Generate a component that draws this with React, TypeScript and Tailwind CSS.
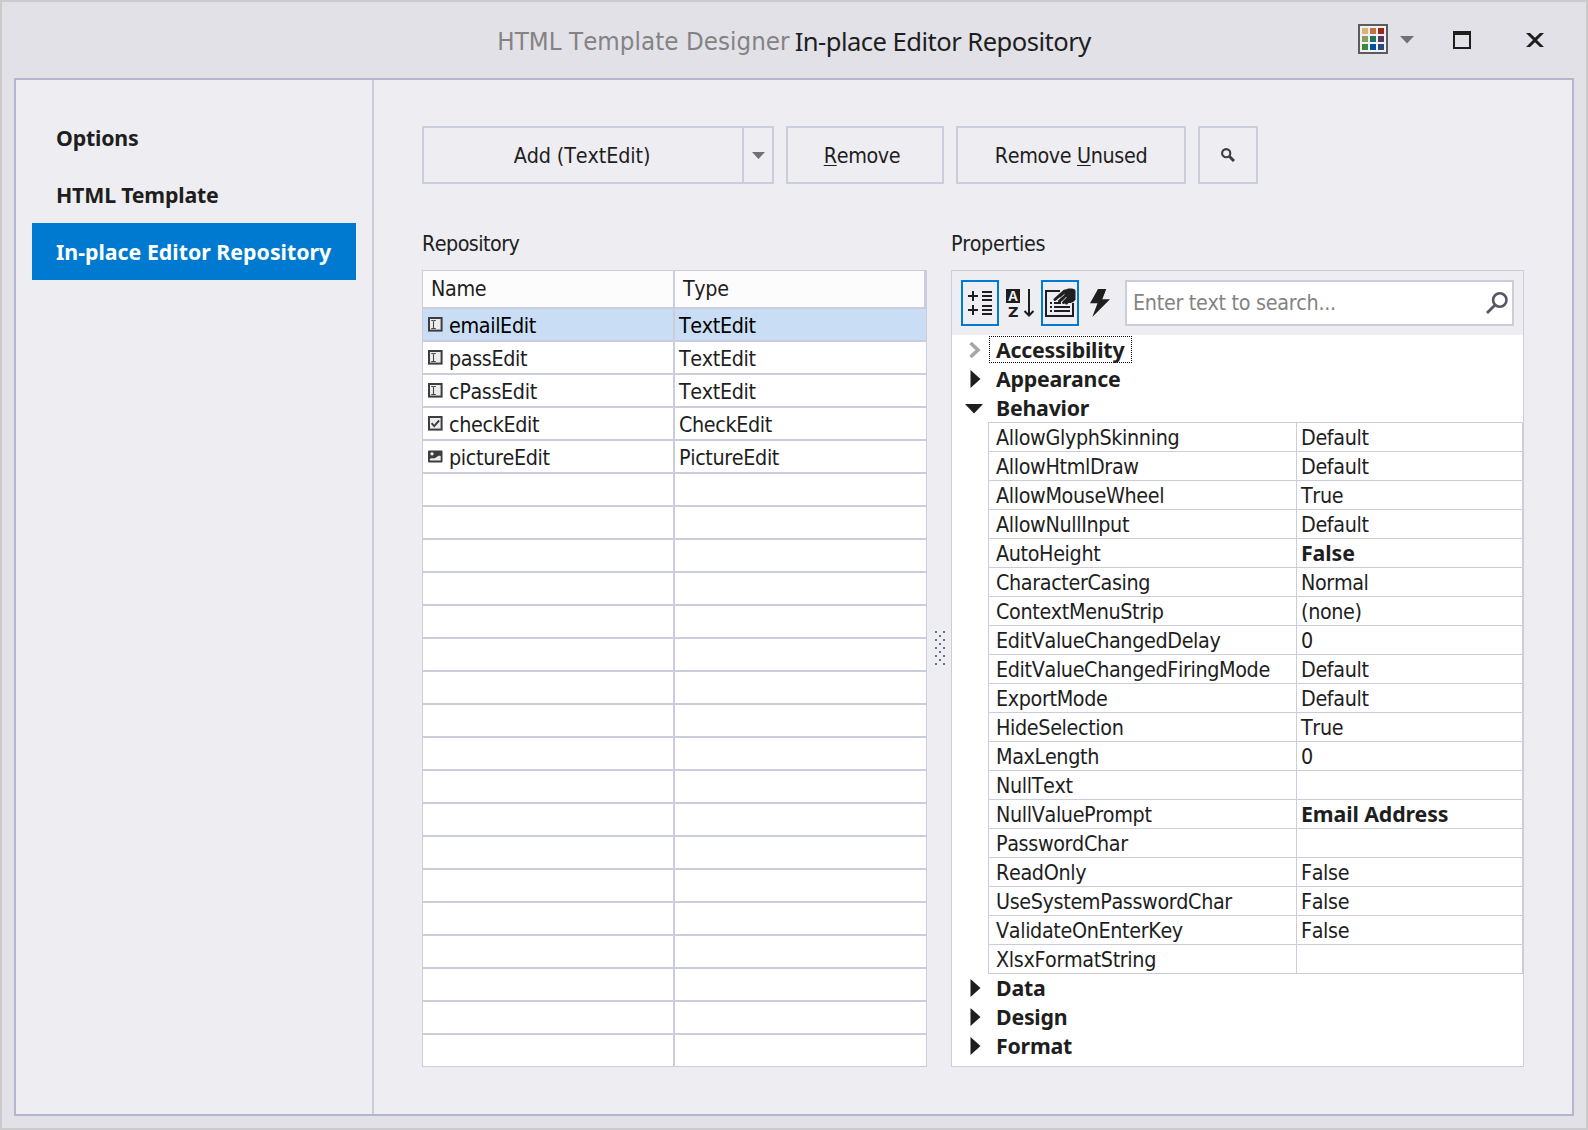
import { useState } from "react";
import clsx from "clsx";

const MENU = ["Options", "HTML Template", "In-place Editor Repository"];

const REPOSITORY = [
  { name: "emailEdit", type: "TextEdit" },
  { name: "passEdit", type: "TextEdit" },
  { name: "cPassEdit", type: "TextEdit" },
  { name: "checkEdit", type: "CheckEdit" },
  { name: "pictureEdit", type: "PictureEdit" },
];

const EMPTY_ROWS = 18;

const BEHAVIOR = [
  { name: "AllowGlyphSkinning", value: "Default" },
  { name: "AllowHtmlDraw", value: "Default" },
  { name: "AllowMouseWheel", value: "True" },
  { name: "AllowNullInput", value: "Default" },
  { name: "AutoHeight", value: "False", changed: true },
  { name: "CharacterCasing", value: "Normal" },
  { name: "ContextMenuStrip", value: "(none)" },
  { name: "EditValueChangedDelay", value: "0" },
  { name: "EditValueChangedFiringMode", value: "Default" },
  { name: "ExportMode", value: "Default" },
  { name: "HideSelection", value: "True" },
  { name: "MaxLength", value: "0" },
  { name: "NullText", value: "" },
  { name: "NullValuePrompt", value: "Email Address", changed: true },
  { name: "PasswordChar", value: "" },
  { name: "ReadOnly", value: "False" },
  { name: "UseSystemPasswordChar", value: "False" },
  { name: "ValidateOnEnterKey", value: "False" },
  { name: "XlsxFormatString", value: "" },
];

const PALETTE = [
  "bg-[#deb277]",
  "bg-[#c3713f]",
  "bg-[#a32413]",
  "bg-[#8b9f58]",
  "bg-[#1d7265]",
  "bg-[#543b59]",
  "bg-[#3b8a34]",
  "bg-[#0050a0]",
  "bg-[#2a4a7f]",
];

const boldFont =
  "font-['Noto_Sans','DejaVu_Sans',sans-serif] font-bold [font-kerning:normal]";

const Caret = ({ width = 14 }: { width?: number }) => (
  <svg width={width} height={width / 2 + 1} viewBox="0 0 14 8" fill="#717171">
    <path d="M0 0h14L7 7.5z" />
  </svg>
);

const RowIcon = ({ type }: { type: string }) => {
  if (type === "PictureEdit") {
    return (
      <svg width="15" height="15" viewBox="0 0 15 15">
        <rect x="0" y="1.5" width="14.5" height="12" rx="1" fill="#3d3d3f" />
        <circle cx="4" cy="4.8" r="1.6" fill="#fff" />
        <path d="M1.8 11.5V10C4 8.5 6 10 8 8.500s3-2 4.700-1.500v4.500z" fill="#ededed" />
      </svg>
    );
  }
  return (
    <svg width="15" height="15" viewBox="0 0 15 15" fill="none">
      <rect x="1" y="1" width="12.6" height="12.6" fill="#ececee" stroke="#3d3d3f" strokeWidth="2" />
      {type === "CheckEdit" ? (
        <path d="M3.6 7.2l2.6 2.9 4.9-5.6" stroke="#3d3d3f" strokeWidth="1.9" />
      ) : (
        <path d="M3.200 3.500h1.600l.7.6.7-.6h1.600M5.500 4v7M3.200 11.500h1.600l.7-.6.7.6h1.600" stroke="#4a4a4c" strokeWidth="1.100" />
      )}
    </svg>
  );
};

const Expander = ({ state }: { state: "focused" | "closed" | "open" }) => (
  <svg width="18" height="18" viewBox="0 0 18 18" fill="#1e1e1e">
    {state === "focused" && (
      <path d="M5.5 2l7.5 7-7.5 7" fill="none" stroke="#a6a6a6" strokeWidth="3.6" />
    )}
    {state === "closed" && <path d="M5.5 0v18L15.5 9z" />}
    {state === "open" && <path d="M0 5h18l-9 9.5z" />}
  </svg>
);

const Category = ({
  title,
  state = "closed",
}: {
  title: string;
  state?: "focused" | "closed" | "open";
}) => (
  <div className="flex h-[29px] items-center pl-[13px]">
    <Expander state={state} />
    <div
      className={clsx(
        boldFont,
        "ml-[6px] flex h-[27px] items-center border border-dotted pr-[7px] pl-[6px] tracking-[-0.23px]",
        state === "focused" ? "border-black" : "border-transparent"
      )}
    >
      {title}
    </div>
  </div>
);

const App = () => {
  const [page, setPage] = useState(MENU[2]);
  const [selected, setSelected] = useState("emailEdit");
  const [search, setSearch] = useState("");

  return (
    <div className="flex h-[1130px] w-[1588px] flex-col border-2 border-[#cbcbcb] bg-[#e2e1e7] px-3 pb-3 font-['DejaVu_Sans_Condensed','DejaVu_Sans',sans-serif] text-[21.33px] leading-none tracking-[-0.36px] text-[#1e1e1e] [font-kerning:none]">
      <header className="grid h-[76px] shrink-0 grid-cols-[1fr_auto_1fr] items-center">
        <div />
        <h1 className="flex gap-[5px] pt-1 text-[25.6px] whitespace-nowrap">
          <span className="tracking-[0.07px] text-[#838383]">HTML Template Designer</span>
          <span className="font-['Noto_Sans',sans-serif] tracking-[-0.54px]">
            In-place Editor Repository
          </span>
        </h1>
        <div className="flex items-center justify-end pr-[30px]">
          <div className="-mt-[2px] grid size-[30px] grid-cols-3 gap-[2px] border-2 border-[#5c5c5f] bg-[#f1f0f4] p-[2px]">
            {PALETTE.map((color) => (
              <div key={color} className={color} />
            ))}
          </div>
          <div className="ml-3">
            <Caret />
          </div>
          <div className="ml-[39px] size-[18px] border-2 border-t-4 border-[#1e1e1e]" />
          <svg className="ml-[55px]" width="18" height="14" viewBox="0 0 18 14" fill="#1e1e1e">
            <path d="M0 0h4l5 4.7L14 0h4l-7 7 7 7h-4L9 9.3 4 14H0l7-7z" />
          </svg>
        </div>
      </header>

      <main className="flex min-h-0 flex-1 border-2 border-[#b4b6cd] bg-[#eeedf2]">
        <nav className="flex w-[358px] shrink-0 flex-col border-r-2 border-[#cccddc] px-4 pt-[29px]">
          {MENU.map((item) => (
            <button
              key={item}
              onClick={() => setPage(item)}
              className={clsx(
                boldFont,
                "flex h-[57px] items-center px-6 whitespace-nowrap",
                page === item
                  ? "bg-[#007ad0] tracking-normal text-white"
                  : "tracking-[-0.2px]"
              )}
            >
              {item}
            </button>
          ))}
        </nav>

        <section className="flex flex-1 flex-col pt-[46px] pl-[48px]">
          <div className="flex h-[58px] gap-3">
            <div className="flex w-[352px] border-2 border-[#cccddc]">
              <button className="flex-1 border-r-2 border-[#cccddc] pt-[2px] pr-[2px] tracking-[-0.1px]">
                Add (TextEdit)
              </button>
              <button className="flex w-7 items-center justify-center pt-[2px]">
                <Caret width={13} />
              </button>
            </div>
            <button className="w-[158px] border-2 border-[#cccddc] pt-[2px] pr-[6px]">
              <u className="decoration-1 underline-offset-[2px]">R</u>emove
            </button>
            <button className="w-[230px] border-2 border-[#cccddc] pt-[2px]">
              Remove <u className="decoration-1 underline-offset-[2px]">U</u>nused
            </button>
            <button className="flex w-[60px] items-center justify-center border-2 border-[#cccddc]">
              <svg width="14" height="14" viewBox="0 0 14 14" fill="none" stroke="#3d3d3f">
                <circle cx="5.2" cy="5.2" r="4.1" strokeWidth="2.1" />
                <path d="M8 8l5 5" strokeWidth="3" />
              </svg>
            </button>
          </div>

          <div className="mt-[49px] flex">
            <div className="w-[505px]">
              <h2 className="h-[37px] leading-[21px] tracking-[-0.55px]">Repository</h2>
              <div className="h-[797px] border border-[#cccddc] bg-white">
                <div className="grid h-[38px] grid-cols-[252px_1fr] border-r-2 border-b-2 border-[#cccddc] bg-[#fcfcfc]">
                  <div className="flex items-center border-r-2 border-[#cccddc] pl-2">Name</div>
                  <div className="flex items-center pl-2">Type</div>
                </div>
                {REPOSITORY.map((row) => (
                  <div
                    key={row.name}
                    onClick={() => setSelected(row.name)}
                    className={clsx(
                      "grid h-[33px] grid-cols-[252px_1fr] border-b-2 border-[#cccddc]",
                      selected === row.name && "bg-[#c9ddf4] text-black"
                    )}
                  >
                    <div className="flex items-center gap-[6px] border-r-2 border-[#cccddc] pl-[5px]">
                      <RowIcon type={row.type} />
                      <span className="pt-[2px]">{row.name}</span>
                    </div>
                    <div className="flex items-center pt-[2px] pl-1">{row.type}</div>
                  </div>
                ))}
                {Array.from({ length: EMPTY_ROWS }, (_, i) => (
                  <div
                    key={i}
                    className="grid h-[33px] grid-cols-[252px_1fr] border-b-2 border-[#cccddc] last:h-[31px] last:border-b-0"
                  >
                    <div className="border-r-2 border-[#cccddc]" />
                    <div />
                  </div>
                ))}
              </div>
            </div>

            <div className="flex w-6 flex-col items-center pt-[398px]">
              <svg className="ml-[2px]" width="10" height="34" viewBox="0 0 10 34" fill="#65728c">
                {[0, 8, 16, 24, 32].map((y) => (
                  <g key={y}>
                    <rect x="0" y={y} width="2" height="2" />
                    <rect x="8" y={y} width="2" height="2" />
                    {y < 32 && <rect x="4" y={y + 4} width="2" height="2" />}
                  </g>
                ))}
              </svg>
            </div>

            <div className="w-[573px]">
              <h2 className="h-[37px] leading-[21px]">Properties</h2>
              <div className="h-[797px] border border-[#cccddc] bg-white">
                <div className="flex h-16 items-start bg-[#eeedf2] pt-[9px] pl-[9px]">
                  <button className="flex h-[46px] w-[38px] items-center justify-center border-2 border-[#007ad0]">
                    <svg width="24" height="26" viewBox="0 0 24 26" fill="none" stroke="#1e1e1e" strokeWidth="2">
                      <path d="M5 1v10M0 6h10M5 15v10M0 20h10" />
                      <path d="M14 2h10M14 6h10M14 10h10M14 16h10M14 20h10M14 24h10" />
                    </svg>
                  </button>
                  <button className="flex h-[46px] w-[42px] items-center justify-center pr-px">
                    <svg className="overflow-visible" width="28" height="28" viewBox="0 0 28 28">
                      <rect width="14" height="14" fill="#1e1e1e" />
                      <text x="7" y="12.3" textAnchor="middle" fontSize="14" fontWeight="700" fontFamily="Liberation Sans" letterSpacing="0" fill="#f3f3f5">A</text>
                      <text x="7.2" y="28" textAnchor="middle" fontSize="14.5" fontWeight="700" fontFamily="DejaVu Sans" letterSpacing="0" fill="#1e1e1e">Z</text>
                      <path d="M23 0v26M18.5 22l4.5 4.5 4.5-4.5" fill="none" stroke="#1e1e1e" strokeWidth="2" />
                    </svg>
                  </button>
                  <button className="flex h-[46px] w-[38px] items-center justify-center border-2 border-[#007ad0]">
                    <svg className="ml-px" width="31" height="30" viewBox="0 0 31 30">
                      <path d="M15 3H1v25h27V15" fill="none" stroke="#1e1e1e" strokeWidth="2" />
                      <path d="M5 15h2M9 15h7M5 19h2M9 19h16M5 23h2M9 23h16" stroke="#1e1e1e" strokeWidth="2" />
                      <path
                        d="M19 2.500c2-1.500 4-2 6-2 2.500 0 5.500.5 5.500 2.500v8.500c-1 2-3 3-5 3.500l-7-.5-4-5z"
                        fill="#1e1e1e"
                      />
                      <path
                        d="M10 11.500L19.500 3M14.500 13l6.500-5.500M18.500 14.500l4-4M21.500 15l3-3.500"
                        fill="none"
                        stroke="#1e1e1e"
                        strokeWidth="3"
                        strokeLinecap="round"
                      />
                      <path d="M12.500 12.500l7-6.200M16.700 14l4.800-5" stroke="#eeedf2" strokeWidth="0.900" />
                    </svg>
                  </button>
                  <button className="flex h-[46px] w-[46px] justify-center pt-[9px] pr-1">
                    <svg width="20" height="28" viewBox="0 0 20 28" fill="#1e1e1e">
                      <path d="M8 0h8.300l-4 10.200H20L2.300 28 7.500 14.300H0z" />
                    </svg>
                  </button>
                  <div className="flex h-[46px] w-[389px] items-center border-2 border-[#cccddc] bg-white pr-1 pl-[6px]">
                    <input
                      value={search}
                      onChange={(e) => setSearch(e.target.value)}
                      placeholder="Enter text to search..."
                      className="h-full min-w-0 flex-1 pb-[2px] tracking-[-0.3px] outline-none placeholder:text-[#838383]"
                    />
                    <svg width="22" height="22" viewBox="0 0 22 22" fill="none" stroke="#575466">
                      <circle cx="13.8" cy="8" r="6.7" strokeWidth="2.6" />
                      <path d="M9 13l-8 8" strokeWidth="2.8" />
                    </svg>
                  </div>
                </div>

                <Category title="Accessibility" state="focused" />
                <Category title="Appearance" />
                <Category title="Behavior" state="open" />
                <div className="ml-9 border-r border-b border-l border-[#cccddc]">
                  {BEHAVIOR.map((prop) => (
                    <div
                      key={prop.name}
                      className="grid h-[29px] grid-cols-[308px_1fr] border-t border-[#cccddc]"
                    >
                      <div className="flex items-center border-r border-[#cccddc] pt-[2px] pl-[7px]">
                        {prop.name}
                      </div>
                      <div
                        className={clsx(
                          "flex items-center pl-1",
                          prop.changed ? [boldFont, "tracking-[-0.1px]"] : "pt-[2px]"
                        )}
                      >
                        {prop.value}
                      </div>
                    </div>
                  ))}
                </div>
                <div className="-mt-px">
                  <Category title="Data" />
                  <Category title="Design" />
                  <Category title="Format" />
                </div>
              </div>
            </div>
          </div>
        </section>
      </main>
    </div>
  );
};

export default App;
